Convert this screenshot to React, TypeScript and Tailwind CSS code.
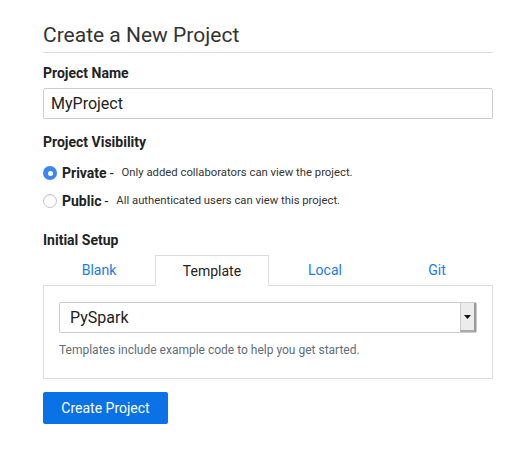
import React, { useState } from 'react'

type Tab = 'Blank' | 'Template' | 'Local' | 'Git'

const tabs: Tab[] = ['Blank', 'Template', 'Local', 'Git']

export default function App() {
  const [name, setName] = useState('MyProject')
  const [visibility, setVisibility] = useState<'private' | 'public'>('private')
  const [tab, setTab] = useState<Tab>('Template')

  return (
    <div
      className="min-h-screen bg-white pt-[23px] pl-[43px] text-[#222]"
      style={{ fontFamily: 'Roboto, "Liberation Sans", sans-serif' }}
    >
      <div className="w-[450px]">
        <h1 className="text-[21px] leading-[25px] text-[#333] pb-[4px] border-b border-[#ddd]">
          Create a New Project
        </h1>

        {/* project name */}
        <label className="block mt-[10px] text-[14px] leading-[20px] font-bold">Project Name</label>
        <input
          value={name}
          onChange={(e) => setName(e.target.value)}
          className="mt-[5px] w-full h-[31px] border border-[#ccc] rounded-[2px] px-[7px] text-[16px] text-[#222] outline-none"
        />

        {/* visibility */}
        <p className="mt-[13px] text-[14px] leading-[20px] font-bold">Project Visibility</p>
        <div className="mt-[11px] flex flex-col gap-[8px]">
          <RadioRow
            checked={visibility === 'private'}
            onClick={() => setVisibility('private')}
            label="Private"
            desc="Only added collaborators can view the project."
          />
          <RadioRow
            checked={visibility === 'public'}
            onClick={() => setVisibility('public')}
            label="Public"
            desc="All authenticated users can view this project."
          />
        </div>

        {/* initial setup */}
        <p className="mt-[19px] text-[14px] leading-[20px] font-bold">Initial Setup</p>
        <div className="mt-[5px] flex h-[30px]">
          {tabs.map((t) =>
            t === tab ? (
              <button
                key={t}
                className="flex-1 flex items-center justify-center text-[14px] text-[#222] bg-white border border-b-0 border-[#ddd] relative z-10 h-[31px]"
              >
                {t}
              </button>
            ) : (
              <button
                key={t}
                onClick={() => setTab(t)}
                className="flex-1 flex items-center justify-center text-[14px] text-[#1a7ae8]"
              >
                {t}
              </button>
            )
          )}
        </div>
        <div className="border border-[#ddd] px-[15px] pt-[16px] pb-[20px]">
          <div className="flex h-[31px] border border-[#ccc] rounded-[2px] bg-white">
            <span className="flex-1 flex items-center pl-[10px] text-[16px] text-[#222]">PySpark</span>
            <span className="w-[16px] flex items-center justify-center bg-[#ececec] border-l border-[#ccc] border-r-2 border-b-2 border-r-[#999] border-b-[#aaa]">
              <svg width="7" height="4" viewBox="0 0 7 4">
                <path d="M0 0h7L3.5 4z" fill="#111" />
              </svg>
            </span>
          </div>
          <p className="mt-[9px] text-[12px] leading-[16px] text-[#5f6d7c]">
            Templates include example code to help you get started.
          </p>
        </div>

        <button className="mt-[13px] w-[125px] h-[32px] rounded-[2px] bg-[#0a72e6] text-white text-[14px]">
          Create Project
        </button>
      </div>
    </div>
  )
}

function RadioRow({
  checked,
  onClick,
  label,
  desc,
}: {
  checked: boolean
  onClick: () => void
  label: string
  desc: string
}) {
  return (
    <div className="flex items-center h-[20px] cursor-pointer" onClick={onClick}>
      {checked ? (
        <span className="w-[14px] h-[14px] rounded-full bg-[#3b86f0] flex items-center justify-center">
          <span className="w-[5px] h-[5px] rounded-full bg-white" />
        </span>
      ) : (
        <span className="w-[14px] h-[14px] rounded-full border border-[#c4c4c4] bg-white shadow-[inset_0_1px_1px_rgba(0,0,0,0.08)]" />
      )}
      <span className="ml-[5px] text-[14px] font-bold">{label}</span>
      <span className="ml-[3px] text-[14px]">-</span>
      <span className="ml-[8px] text-[11.3px] text-[#333]">{desc}</span>
    </div>
  )
}
